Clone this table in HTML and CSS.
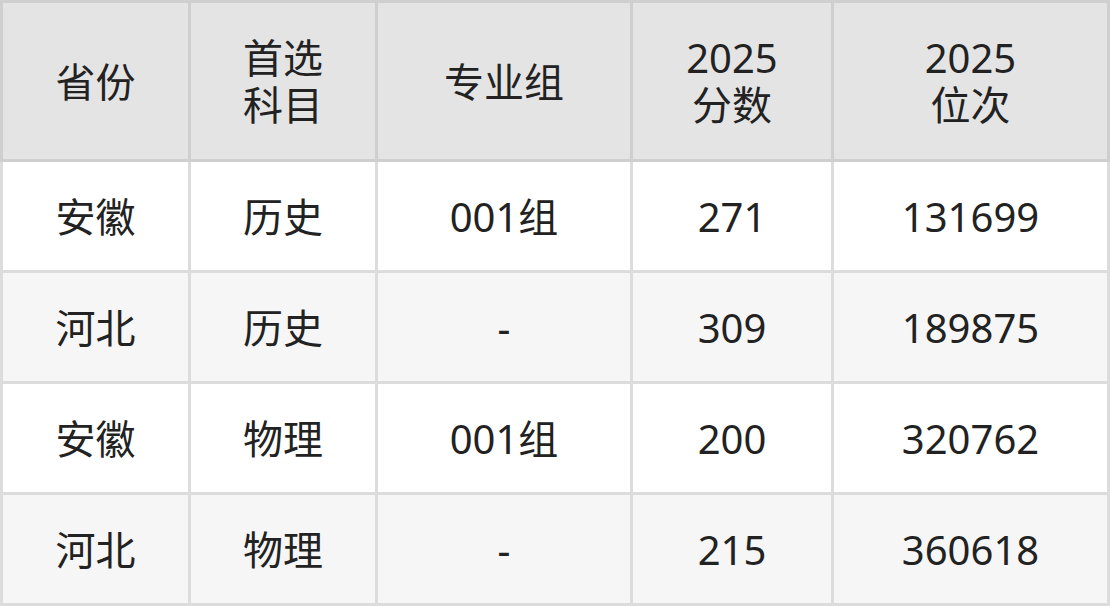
FILE: index.html
```html
<!DOCTYPE html>
<html lang="zh">
<head>
<meta charset="utf-8">
<link rel="stylesheet" href="styles.css">
</head>
<body>
<div class="table">
  <div class="head">
    <div class="cell">省份</div>
    <div class="cell">首选<br>科目</div>
    <div class="cell">专业组</div>
    <div class="cell">2025<br>分数</div>
    <div class="cell">2025<br>位次</div>
  </div>
  <div class="body">
    <div class="cell">安徽</div>
    <div class="cell">历史</div>
    <div class="cell">001组</div>
    <div class="cell">271</div>
    <div class="cell">131699</div>

    <div class="cell alt">河北</div>
    <div class="cell alt">历史</div>
    <div class="cell alt">-</div>
    <div class="cell alt">309</div>
    <div class="cell alt">189875</div>

    <div class="cell">安徽</div>
    <div class="cell">物理</div>
    <div class="cell">001组</div>
    <div class="cell">200</div>
    <div class="cell">320762</div>

    <div class="cell alt">河北</div>
    <div class="cell alt">物理</div>
    <div class="cell alt">-</div>
    <div class="cell alt">215</div>
    <div class="cell alt">360618</div>
  </div>
</div>
</body>
</html>
```
FILE: styles.css
```css
html, body {
  margin: 0;
  padding: 0;
  background: #ffffff;
}
body {
  font-family: "Noto Sans", "Noto Sans CJK SC", sans-serif;
  color: #222222;
  font-size: 40px;
}
.table {
  width: 1110px;
}
.head,
.body {
  display: grid;
  grid-template-columns: 185px 184px 252px 198px 273px;
  column-gap: 3px;
}
.head {
  background: #cfcfcf;
  padding: 3px;
  row-gap: 3px;
}
.head .cell {
  background: #e4e4e4;
  height: 156px;
  line-height: 47px;
}
.body {
  background: #dcdcdc;
  padding: 0 3px 3px;
  row-gap: 3px;
}
.body .cell {
  background: #ffffff;
  height: 108px;
  line-height: 47px;
}
.body .cell.alt {
  background: #f6f6f6;
}
.cell {
  display: flex;
  align-items: center;
  justify-content: center;
  text-align: center;
}
```
